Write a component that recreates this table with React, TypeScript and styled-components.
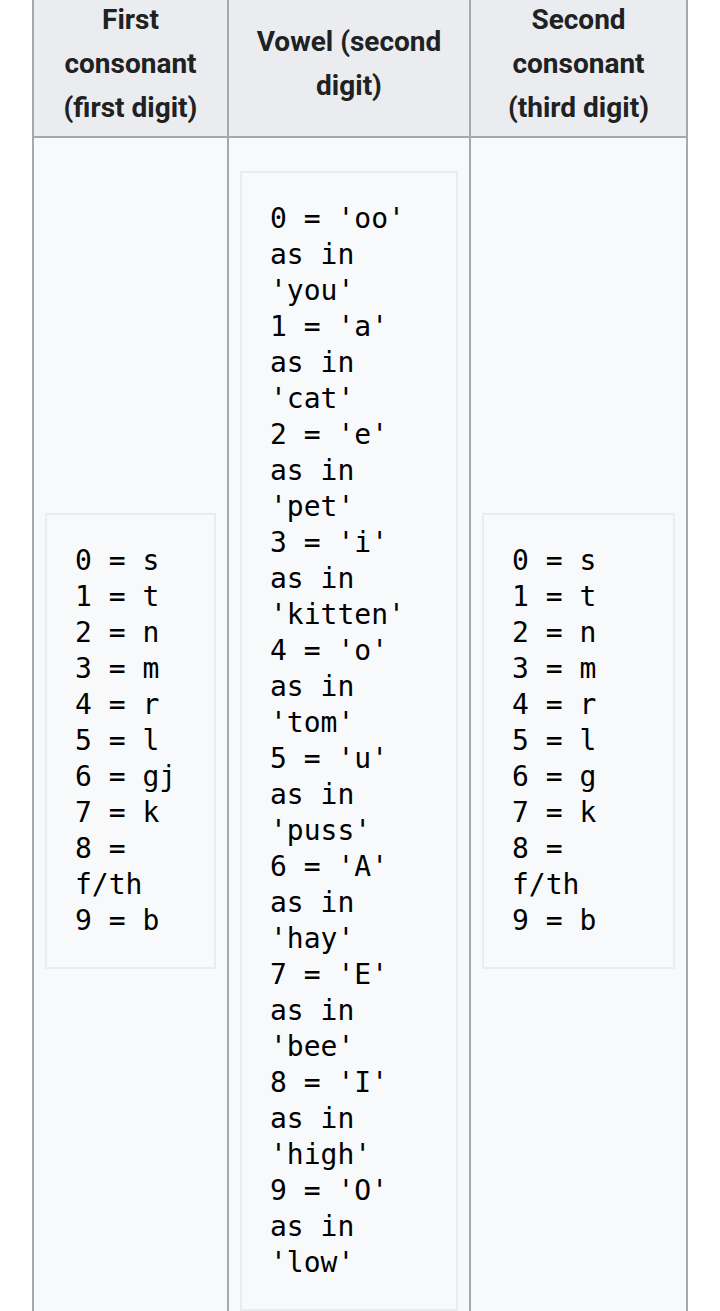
import React from "react";
import styled, { createGlobalStyle } from "styled-components";

const GlobalStyle = createGlobalStyle`
  html, body {
    margin: 0;
    padding: 0;
    background: #ffffff;
  }
  body {
    font-family: Roboto, "Liberation Sans", sans-serif;
    color: #202122;
    overflow: hidden;
  }
`;

const Table = styled.div`
  display: grid;
  grid-template-columns: 195px 242px 217px;
  width: max-content;
  margin: -10px 0 0 32px;
  border-left: 2px solid #a2a9b1;
  border-top: 2px solid #a2a9b1;
`;

const HeaderCell = styled.div`
  box-sizing: border-box;
  display: flex;
  align-items: center;
  justify-content: center;
  padding: 6px 8px;
  background: #eaecf0;
  border-right: 2px solid #a2a9b1;
  border-bottom: 2px solid #a2a9b1;
  font-family: Roboto, "Liberation Sans", sans-serif;
  font-weight: 700;
  font-size: 28px;
  line-height: 44px;
  text-align: center;
  color: #202122;
`;

const BodyCell = styled.div`
  box-sizing: border-box;
  display: flex;
  flex-direction: column;
  justify-content: center;
  padding: 11px;
  background: #f8f9fa;
  border-right: 2px solid #a2a9b1;
  border-bottom: 2px solid #a2a9b1;
  min-width: 0;
`;

const Code = styled.pre`
  box-sizing: border-box;
  margin: 22px 0;
  padding: 28px;
  border: 2px solid #eaecf0;
  background: #f8f9fa;
  font-family: "DejaVu Sans Mono", monospace;
  font-size: 28px;
  line-height: 36px;
  color: #000000;
  white-space: pre-wrap;
  overflow-wrap: break-word;
`;

const firstConsonants = [
  "0 = s",
  "1 = t",
  "2 = n",
  "3 = m",
  "4 = r",
  "5 = l",
  "6 = gj",
  "7 = k",
  "8 = f/th",
  "9 = b",
];

const vowels = [
  "0 = 'oo' as in 'you'",
  "1 = 'a' as in 'cat'",
  "2 = 'e' as in 'pet'",
  "3 = 'i' as in 'kitten'",
  "4 = 'o' as in 'tom'",
  "5 = 'u' as in 'puss'",
  "6 = 'A' as in 'hay'",
  "7 = 'E' as in 'bee'",
  "8 = 'I' as in 'high'",
  "9 = 'O' as in 'low'",
];

const secondConsonants = [
  "0 = s",
  "1 = t",
  "2 = n",
  "3 = m",
  "4 = r",
  "5 = l",
  "6 = g",
  "7 = k",
  "8 = f/th",
  "9 = b",
];

const headers = [
  "First consonant (first digit)",
  "Vowel (second digit)",
  "Second consonant (third digit)",
];

export default function App() {
  const columns = [firstConsonants, vowels, secondConsonants];
  return (
    <>
      <GlobalStyle />
      <Table role="table">
        {headers.map((h) => (
          <HeaderCell key={h} role="columnheader">
            {h}
          </HeaderCell>
        ))}
        {columns.map((lines, i) => (
          <BodyCell key={i} role="cell">
            <Code>{lines.join("\n")}</Code>
          </BodyCell>
        ))}
      </Table>
    </>
  );
}
